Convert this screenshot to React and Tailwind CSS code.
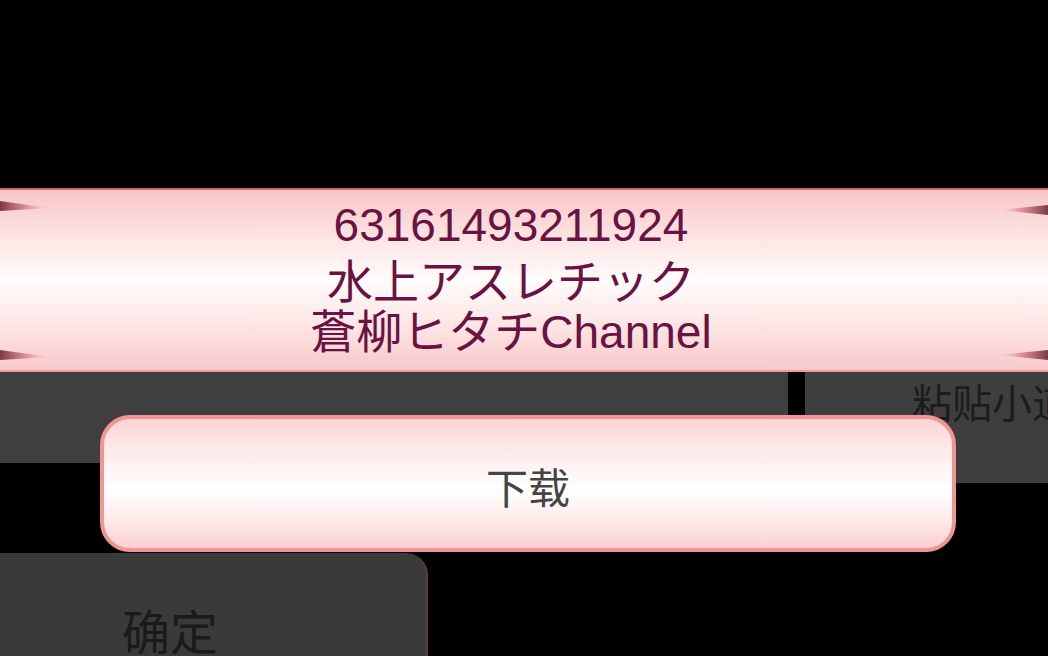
import React from "react";

function Spike({ side, className, uid }) {
  const id = `g-${uid}`;
  return (
    <svg
      className={className}
      width="56"
      height="18"
      viewBox="0 0 56 18"
      preserveAspectRatio="none"
    >
      <defs>
        <linearGradient id={id} x1={side === "left" ? "0" : "1"} y1="0" x2={side === "left" ? "1" : "0"} y2="0">
          <stop offset="0" stopColor="#6a2a36" stopOpacity="0.9" />
          <stop offset="0.5" stopColor="#d27a84" stopOpacity="0.8" />
          <stop offset="1" stopColor="#f3b4b8" stopOpacity="0" />
        </linearGradient>
      </defs>
      {side === "left" ? (
        <polygon points="0,3 0,13 50,10" fill={`url(#${id})`} />
      ) : (
        <polygon points="56,3 56,13 6,8" fill={`url(#${id})`} />
      )}
    </svg>
  );
}

export default function App() {
  return (
    <div
      className="w-[1048px] h-[656px] bg-black overflow-hidden flex flex-col"
      style={{ fontFamily: '"Liberation Sans", "Noto Sans CJK JP", "Noto Sans CJK SC", sans-serif' }}
    >
      <div className="h-[188px] shrink-0" />

      {/* Banner */}
      <div className="relative h-[184px] shrink-0 border-t-2 border-b-2 border-t-[#c86a72] border-b-[#ec9aa0] bg-[linear-gradient(to_bottom,#f7c6c8_0%,#fde2e2_25%,#fffcfb_50%,#fde2e2_78%,#f7c8ca_100%)] flex flex-col items-center pt-[10px] pr-[26px]">
        <Spike side="left" uid="a" className="absolute left-0 top-[8px]" />
        <Spike side="left" uid="b" className="absolute left-0 top-[157px]" />
        <Spike side="right" uid="c" className="absolute right-0 top-[12px]" />
        <Spike side="right" uid="d" className="absolute right-0 top-[157px]" />
        <div className="text-[46px] leading-[51px] text-[#6a1242] text-center whitespace-nowrap">
          <div>63161493211924</div>
          <div className="mt-[6px]">水上アスレチック</div>
          <div className="-mt-[1px]">蒼柳ヒタチChannel</div>
        </div>
      </div>

      {/* Panels row */}
      <div className="flex h-[111px] shrink-0">
        <div className="w-[788px] h-[91px] bg-[#3f3f3f]" />
        <div className="w-[17px]" />
        <div
          className="flex-1 h-[111px] bg-[#3e3e3e] pl-[107px] pt-[9px] text-[40px] leading-none text-[#1c1c1c] whitespace-nowrap overflow-hidden"
          style={{ fontFamily: '"Noto Sans CJK SC", sans-serif' }}
        >
          粘贴小道具
        </div>
      </div>

      {/* Download button */}
      <div className="relative z-10 -mt-[68px] ml-[100px] w-[856px] h-[137px] shrink-0 rounded-[30px] border-[4px] border-[#f19496] bg-[linear-gradient(to_bottom,#fbd4d5_0%,#fdeaea_25%,#ffffff_55%,#fde8e8_80%,#f9d0d1_100%)] flex items-center justify-center">
        <span
          className="text-[42px] leading-none text-[#454545] mt-[4px]"
          style={{ fontFamily: '"Noto Sans CJK SC", sans-serif' }}
        >
          下载
        </span>
      </div>

      {/* Bottom panel */}
      <div className="mt-[1px] w-[428px] flex-1 rounded-tr-[22px] bg-[#3b3a3a] border-r-2 border-[#5a3a3a] pl-[122px] pt-[52px] overflow-hidden">
        <span
          className="text-[48px] leading-none text-[#1a1a1a] whitespace-nowrap"
          style={{ fontFamily: '"Noto Sans CJK SC", sans-serif' }}
        >
          确定
        </span>
      </div>
    </div>
  );
}
